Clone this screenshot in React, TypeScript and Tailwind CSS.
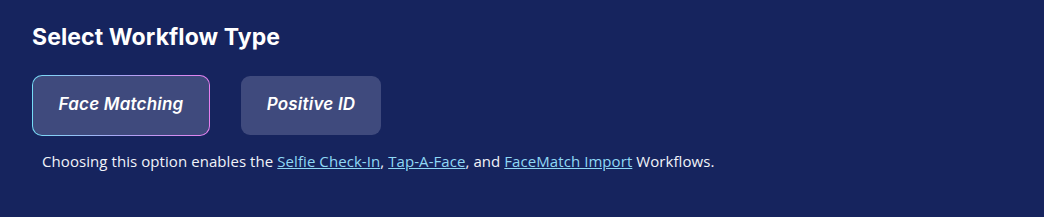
import React, { useState } from 'react';

const options = ['Face Matching', 'Positive ID'];

const App: React.FC = () => {
  const [selected, setSelected] = useState('Face Matching');

  return (
    <div className="w-[1044px] h-[217px] bg-[#16245e] pl-8 pt-[23px] font-['Inter',sans-serif] text-white">
      <h2 className="text-[23px] font-bold leading-[28px] tracking-[0.1px]">Select Workflow Type</h2>

      <div className="flex items-center gap-[31px] mt-[24px]">
        {options.map((opt) =>
          opt === selected ? (
            <div
              key={opt}
              className="rounded-[10px] p-px bg-gradient-to-r from-[#74dcf6] via-[#a9a4f4] to-[#e77ef0]"
            >
              <button
                onClick={() => setSelected(opt)}
                className="w-[176px] h-[59px] pb-[1px] rounded-[9px] bg-[#3f4a7d] text-[17px] font-semibold italic tracking-[0.2px]"
              >
                {opt}
              </button>
            </div>
          ) : (
            <button
              key={opt}
              onClick={() => setSelected(opt)}
              className="w-[140px] h-[59px] pb-[1px] rounded-[9px] bg-[#3f4a7d] text-[17px] font-semibold italic tracking-[0.2px]"
            >
              {opt}
            </button>
          )
        )}
      </div>

      <p className="mt-[14px] ml-[10px] text-[15px] leading-[22px] tracking-[0.07px] font-['Open_Sans',sans-serif] text-[#f1f3f9]">
        Choosing this option enables the{' '}
        <a href="#" className="text-[#8fd8f5] underline">Selfie Check-In</a>,{' '}
        <a href="#" className="text-[#8fd8f5] underline">Tap-A-Face</a>, and{' '}
        <a href="#" className="text-[#8fd8f5] underline">FaceMatch Import</a> Workflows.
      </p>
    </div>
  );
};

export default App;
